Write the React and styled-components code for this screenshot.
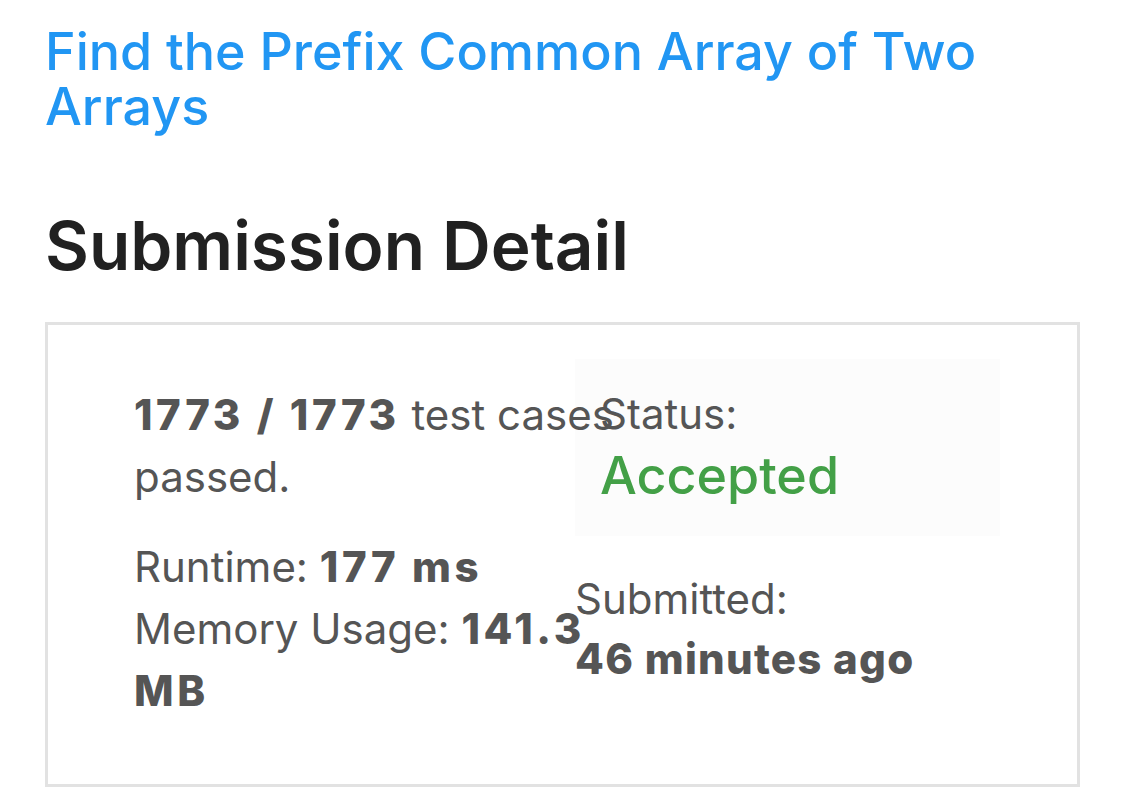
import React from 'react';
import styled, { createGlobalStyle } from 'styled-components';

const GlobalStyle = createGlobalStyle`
  html, body {
    margin: 0;
    padding: 0;
    background: #ffffff;
  }
  body {
    font-family: Inter, "Liberation Sans", Arial, sans-serif;
    color: #555555;
  }
`;

const Page = styled.div`
  padding: 24px 45px 0;
`;

const ProblemTitle = styled.a`
  display: block;
  font-size: 52px;
  line-height: 55px;
  font-weight: 500;
  color: #2196f3;
  text-decoration: none;
  max-width: 960px;
`;

const Heading = styled.h3`
  margin: 71px 0 0;
  font-size: 67.5px;
  line-height: 82px;
  font-weight: 600;
  color: #212121;
`;

const DetailBox = styled.div`
  margin-top: 35px;
  border: 3px solid #e2e2e2;
  padding: 34px 77px 62px 86px;
  display: grid;
  grid-template-columns: 441px 425px;
  align-items: start;
`;

const LeftCol = styled.div`
  position: relative;
  z-index: 1;
  margin-top: 25px;
  font-size: 42px;
  line-height: 62px;
`;

const Group = styled.div`
  & + & {
    margin-top: 28px;
  }
`;

const Line = styled.div`
  white-space: nowrap;
`;

const Strong = styled.b`
  font-weight: 800;
  letter-spacing: 0.085em;
  margin-left: 6px;
  &:first-child {
    margin-left: 0;
  }
`;

const RightCol = styled.div`
  display: flex;
  flex-direction: column;
`;

const StatusPanel = styled.div`
  background: #fcfcfc;
  padding: 23px 25px 29px;
`;

const Label = styled.div`
  font-size: 42px;
  line-height: ${(p) => p.$lh || '63px'};
  white-space: nowrap;
`;

const StatusValue = styled.div`
  font-size: 52px;
  line-height: 1.2;
  font-weight: 500;
  color: #43a047;
`;

const Submitted = styled.div`
  margin-top: 34px;
`;

const SubmittedValue = styled.div`
  font-size: 42px;
  line-height: 64px;
  font-weight: 800;
  letter-spacing: 0.03em;
  white-space: nowrap;
`;

export default function App() {
  return (
    <>
      <GlobalStyle />
      <Page>
        <ProblemTitle href="#">Find the Prefix Common Array of Two Arrays</ProblemTitle>
        <Heading>Submission Detail</Heading>
        <DetailBox>
          <LeftCol>
            <Group>
              <Line>
                <Strong>1773 / 1773</Strong> test cases
              </Line>
              <Line>passed.</Line>
            </Group>
            <Group>
              <Line>
                Runtime: <Strong>177 ms</Strong>
              </Line>
              <Line>
                Memory Usage: <Strong>141.3</Strong>
              </Line>
              <Line>
                <Strong>MB</Strong>
              </Line>
            </Group>
          </LeftCol>
          <RightCol>
            <StatusPanel>
              <Label>Status:</Label>
              <StatusValue>Accepted</StatusValue>
            </StatusPanel>
            <Submitted>
              <Label $lh="57px">Submitted:</Label>
              <SubmittedValue>46 minutes ago</SubmittedValue>
            </Submitted>
          </RightCol>
        </DetailBox>
      </Page>
    </>
  );
}
